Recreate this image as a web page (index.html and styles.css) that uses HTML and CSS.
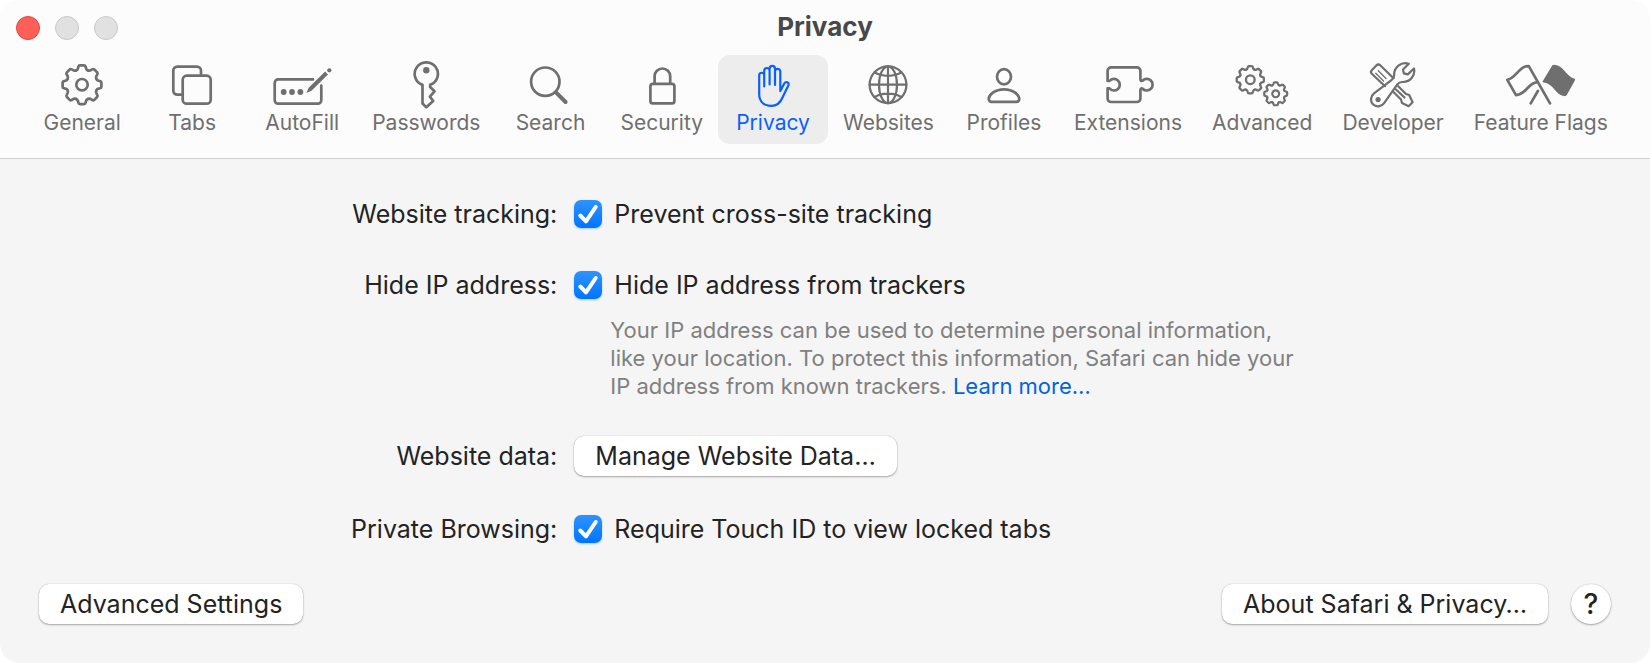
FILE: index.html
```
<!DOCTYPE html>
<html lang="en">
<head>
    <meta charset="UTF-8">
    <title>Privacy</title>
    <link rel="stylesheet" href="styles.css">
</head>
<body>

<!-- shared shapes -->
<svg class="defs" aria-hidden="true">
    <defs>
        <path id="tooth" d="M-5.9 -14.3 Q-4.2 -15 -4 -16.5 L-3.6 -18 Q-3.3 -19.4 -2 -19.4 H2 Q3.3 -19.4 3.6 -18 L4 -16.5 Q4.2 -15 5.9 -14.3"/>
        <g id="gear">
            <use href="#tooth"/>
            <use href="#tooth" transform="rotate(45)"/>
            <use href="#tooth" transform="rotate(90)"/>
            <use href="#tooth" transform="rotate(135)"/>
            <use href="#tooth" transform="rotate(180)"/>
            <use href="#tooth" transform="rotate(225)"/>
            <use href="#tooth" transform="rotate(270)"/>
            <use href="#tooth" transform="rotate(315)"/>
        </g>
    </defs>
</svg>

<div class="window">
    <header class="header">
        <div class="titlebar">
            <div class="lights">
                <button class="light close" aria-label="Close"></button>
                <button class="light" aria-label="Minimize" disabled></button>
                <button class="light" aria-label="Zoom" disabled></button>
            </div>
            <h1>Privacy</h1>
        </div>

        <nav class="toolbar">
            <button class="tab">
                <svg width="48" height="48" viewBox="0 0 48 48">
                    <g transform="translate(24 23.7)"><use href="#gear"/><circle r="5.7"/></g>
                </svg>
                <span>General</span>
            </button>
            <button class="tab">
                <svg width="48" height="48" viewBox="0 0 48 48">
                    <path d="M33 14.7 V9.6 a4 4 0 0 0 -4 -4 H9.3 a4 4 0 0 0 -4 4 V29.6 a4 4 0 0 0 4 4 H14.7"/>
                    <rect x="14.7" y="14.7" width="28" height="28" rx="4"/>
                </svg>
                <span>Tabs</span>
            </button>
            <button class="tab">
                <svg width="60" height="48" viewBox="0 0 60 48">
                    <path d="M41 18.4 H6.2 a3.5 3.5 0 0 0 -3.5 3.5 V39.2 a3.5 3.5 0 0 0 3.5 3.5 H45.8 a3.5 3.5 0 0 0 3.5 -3.5 V24.5"/>
                    <circle class="fill" cx="11.7" cy="31" r="2.9"/>
                    <circle class="fill" cx="20" cy="31" r="2.9"/>
                    <circle class="fill" cx="28.4" cy="31" r="2.9"/>
                    <path class="fill" d="M34.3 32.1 L36.7 26.8 L53.1 10.6 L56 13.4 L39.5 29.7 Z"/>
                    <circle class="fill" cx="57.3" cy="9.3" r="2.1"/>
                </svg>
                <span>AutoFill</span>
            </button>
            <button class="tab">
                <svg width="48" height="48" viewBox="0 0 48 48">
                    <path d="M20.5 23.9 A11.6 11.6 0 1 1 28.1 23.9 V26 L32.5 30.3 L27.9 35.6 L31.2 40 L24.3 46.2 L20.5 42.6 Z"/>
                    <path class="gap" d="M22 23.9 H26.6"/>
                    <circle class="fill" cx="24.3" cy="9.3" r="3.2"/>
                </svg>
                <span>Passwords</span>
            </button>
            <button class="tab">
                <svg width="48" height="48" viewBox="0 0 48 48">
                    <circle cx="19.3" cy="20.7" r="14.2"/>
                    <path class="thick" d="M30 31.4 L39.6 41"/>
                </svg>
                <span>Search</span>
            </button>
            <button class="tab">
                <svg width="48" height="48" viewBox="0 0 48 48">
                    <rect x="12.4" y="22.8" width="24" height="19.6" rx="2.5"/>
                    <path d="M16.6 22.5 V15.3 a7.8 7.8 0 0 1 15.6 0 V22.5"/>
                </svg>
                <span>Security</span>
            </button>
            <button class="tab active" aria-current="page">
                <svg width="48" height="48" viewBox="0 0 48 48">
                    <path d="M15.2 25.5 V14.2 C15.2 10.9 10.2 10.9 10.2 14.2 V33 C10.2 40.5 15 44.8 22.3 44.8 C28.5 44.8 31.5 41.5 33.5 36.5 L39.3 24.5 C40.6 21.3 37 19.8 35.3 22.4 L31.3 30 V10.2 C31.3 7.2 26 7.2 26 10.2 V24 V8 C26 3.9 20.6 3.9 20.6 8 V23.5 V9.7 C20.6 6.1 15.2 6.1 15.2 9.7 V16"/>
                </svg>
                <span>Privacy</span>
            </button>
            <button class="tab">
                <svg width="48" height="48" viewBox="0 0 48 48">
                    <g class="thin" transform="translate(24 23.7)">
                        <circle r="18.4"/>
                        <ellipse rx="9" ry="18.4"/>
                        <path d="M0 -18.4 V18.4 M-18.4 0 H18.4 M-13.5 -12.5 C-7 -7.7 7 -7.7 13.5 -12.5 M-13.5 12.5 C-7 7.7 7 7.7 13.5 12.5"/>
                    </g>
                </svg>
                <span>Websites</span>
            </button>
            <button class="tab">
                <svg width="48" height="48" viewBox="0 0 48 48">
                    <ellipse cx="24" cy="15.8" rx="7" ry="7.6"/>
                    <path d="M11.4 40.8 H36.6 a2.7 2.7 0 0 0 2.7 -2.7 C39.3 34 33.3 28.4 24 28.4 S8.7 34 8.7 38.1 a2.7 2.7 0 0 0 2.7 2.7 Z"/>
                </svg>
                <span>Profiles</span>
            </button>
            <button class="tab">
                <svg width="60" height="48" viewBox="0 0 60 48">
                    <path d="M9.6 20 V10 a3.6 3.6 0 0 1 3.6 -3.6 H38.8 a3.6 3.6 0 0 1 3.6 3.6 V18 C42.4 19.8 43.4 20.4 44.6 19.7 A5.8 5.8 0 1 1 44.6 27.7 C43.4 27 42.4 27.6 42.4 29.4 V37.4 a3.6 3.6 0 0 1 -3.6 3.6 H13.2 a3.6 3.6 0 0 1 -3.6 -3.6 V27.4 L11.5 27.4 A5.8 5.8 0 1 0 11.5 20 Z"/>
                </svg>
                <span>Extensions</span>
            </button>
            <button class="tab">
                <svg width="60" height="48" viewBox="0 0 60 48">
                    <g class="gear-mid" transform="translate(18.3 18.7) scale(.7)"><use href="#gear"/><circle r="6.2"/></g>
                    <g class="gear-small" transform="translate(43.7 32.8) scale(.59)"><use href="#gear"/><circle r="5.8"/></g>
                </svg>
                <span>Advanced</span>
            </button>
            <button class="tab">
                <svg width="60" height="48" viewBox="0 0 60 48">
                    <g class="thin">
                        <path d="M22 25.2 L8.8 12.8 Q7 11 8.8 9.2 L13.3 4.5 Q15.3 2.5 17.5 4.5 L30.5 17.2"/>
                        <path class="hair" d="M12.8 12.3 L20.5 20 M15.3 9.8 L23 17.5"/>
                        <path d="M35.2 25.2 L43 33 L46.2 34 L49.6 41.3 L45.6 45.2 L39 42 L38 38.5 L30.2 30.7 M33 28.5 L41.5 36.5"/>
                        <path d="M45.8 2.7 L40 8.5 L40.8 12.4 L44.8 13.4 L51 7.5 C52.5 14 47.5 21.3 39.5 21 C37 20.8 36.3 21.2 34.5 23.2 L21.3 41.9 C18.6 45.8 13.2 46.6 10 43.3 C6.8 40 7.7 35 11.3 32.2 L28.5 19.2 C30.8 17.5 31.3 16.5 31.2 14 C30.8 6.3 38 0.3 45.8 2.7 Z"/>
                    </g>
                    <circle class="fill" cx="15.1" cy="38.6" r="2.6"/>
                </svg>
                <span>Developer</span>
            </button>
            <button class="tab">
                <svg width="72" height="48" viewBox="0 0 72 48">
                    <path d="M45 42.4 L23.8 5.2 C14 4.5 11.5 17 2.3 18.9 L11 34.2 C21.5 33.5 22 22.5 32.3 21.2"/>
                    <path d="M33 29.8 L25.7 42.4"/>
                    <path class="fill" d="M47.2 4.6 Q48 3.6 49.3 3.7 C59.5 5 60.5 15 69.6 17.7 Q70.6 18.2 70 19.3 L61.8 34 Q61 35.3 59.6 35.1 C50 34 49.5 23 38 21.3 Q37.3 21 37.7 20.3 Z"/>
                </svg>
                <span>Feature Flags</span>
            </button>
        </nav>
    </header>

    <main class="content">
        <div class="settings">
            <span class="name">Website tracking:</span>
            <label class="check">
                <input type="checkbox" checked>
                <svg width="28" height="28" viewBox="0 0 28 28"><path d="M6.3 15.5 L12 21.3 L21.7 7"/></svg>
                Prevent cross-site tracking
            </label>

            <span class="name">Hide IP address:</span>
            <div>
                <label class="check">
                    <input type="checkbox" checked>
                    <svg width="28" height="28" viewBox="0 0 28 28"><path d="M6.3 15.5 L12 21.3 L21.7 7"/></svg>
                    Hide IP address from trackers
                </label>
                <p class="note">
                    Your IP address can be used to determine personal information,<br>
                    like your location. To protect this information, Safari can hide your<br>
                    IP address from known trackers. <a href="#">Learn more…</a>
                </p>
            </div>

            <span class="name">Website data:</span>
            <div class="data"><button class="btn">Manage Website Data…</button></div>

            <span class="name">Private Browsing:</span>
            <label class="check">
                <input type="checkbox" checked>
                <svg width="28" height="28" viewBox="0 0 28 28"><path d="M6.3 15.5 L12 21.3 L21.7 7"/></svg>
                Require Touch ID to view locked tabs
            </label>
        </div>

        <footer class="footer">
            <button class="btn">Advanced Settings</button>
            <div class="right">
                <button class="btn">About Safari &amp; Privacy…</button>
                <button class="btn help" aria-label="Help">?</button>
            </div>
        </footer>
    </main>
</div>

</body>
</html>
```

FILE: styles.css
```
* {
    box-sizing: border-box;
}
body {
    margin: 0;
    background: #fff;
    font-family: Inter, "Liberation Sans", sans-serif;
    font-size: 25px;
    color: #232323;
}
button {
    font: inherit;
    color: inherit;
    border: none;
    padding: 0;
}
.defs {
    position: absolute;
    width: 0;
    height: 0;
}
.window {
    display: flex;
    flex-direction: column;
    min-height: 100vh;
    background: #f5f5f5;
    border-radius: 20px;
    overflow: hidden;
}

/* title bar and tabs */
.header {
    background: #fcfcfc;
    border-bottom: 1px solid #cfcfcf;
    padding-bottom: 14px;
}
.titlebar {
    display: grid;
    grid-template-columns: 1fr auto 1fr;
    align-items: center;
    height: 55px;
    padding: 0 16px;
}
.lights {
    display: flex;
    gap: 15px;
}
.light {
    width: 24px;
    height: 24px;
    border-radius: 50%;
    background: #e1e1e1;
    border: 1px solid #c8c8c8;
}
.light.close {
    background: #ff5f57;
    border-color: #e2463f;
}
h1 {
    margin: 0;
    padding-bottom: 2px;
    font-size: 26px;
    line-height: 30px;
    font-weight: 700;
    color: #484848;
}
.toolbar {
    display: flex;
    justify-content: center;
}
.tab {
    display: flex;
    flex-direction: column;
    align-items: center;
    min-width: 110px;
    height: 89px;
    padding: 6px 15px 0;
    border-radius: 12px;
    background: none;
    color: #6f6f6f;
    font-size: 21px;
    line-height: 28px;
    white-space: nowrap;
}
.tab.active {
    background: #ededed;
    color: #0a60ff;
}
.tab svg {
    display: block;
    fill: none;
    stroke: currentColor;
    stroke-width: 2.7px;
    stroke-linecap: round;
    stroke-linejoin: round;
}
.tab .fill {
    fill: currentColor;
    stroke: none;
}
.tab .thin, .tab.active svg {
    stroke-width: 2.2px;
}
.tab .thick {
    stroke-width: 4px;
}
.tab .hair {
    stroke-width: 1.3px;
}
.tab .gear-mid {
    stroke-width: 3.3px;
}
.tab .gear-small {
    stroke-width: 3.7px;
}
.tab .gap {
    stroke: #fcfcfc;
    stroke-width: 3px;
    stroke-linecap: butt;
}

/* settings */
.content {
    flex: 1;
    display: flex;
    flex-direction: column;
    justify-content: space-between;
    padding: 35px 39px 39px;
}
.settings {
    display: grid;
    grid-template-columns: 1fr 2fr;
    column-gap: 17px;
    line-height: 40px;
}
.settings > * {
    margin-bottom: 31px;
}
.settings > :nth-last-child(-n+2) {
    margin-bottom: 0;
}
.name {
    text-align: right;
}
.check {
    position: relative;
    display: flex;
    align-items: center;
    gap: 12px;
}
.check input {
    appearance: none;
    width: 28px;
    height: 28px;
    margin: 0;
    border-radius: 7px;
    background: #b8b8b8;
}
.check input:checked {
    background: linear-gradient(#2e93ff, #0075ff);
    box-shadow: 0 1px 2px rgba(0, 90, 255, 0.3);
}
.check svg {
    position: absolute;
    left: 0;
    fill: none;
    stroke: #fff;
    stroke-width: 4px;
    stroke-linecap: round;
    stroke-linejoin: round;
    pointer-events: none;
}
.note {
    margin: 11px 0 5px 36px;
    font-size: 22px;
    line-height: 28px;
    color: #808080;
}
.note a {
    color: #0064e1;
    text-decoration: none;
}
.data {
    padding-bottom: 2px;
}
.btn {
    height: 40px;
    padding: 0 21px;
    border-radius: 10px;
    background: #fff;
    line-height: 38px;
    box-shadow: 0 0 1px rgba(0, 0, 0, 0.3), 0 1px 2px rgba(0, 0, 0, 0.3);
    white-space: nowrap;
}
.btn.help {
    width: 40px;
    padding: 0;
    border-radius: 50%;
    font-weight: 500;
    font-size: 28px;
}
.footer, .right {
    display: flex;
    justify-content: space-between;
}
.right {
    gap: 23px;
}
```
